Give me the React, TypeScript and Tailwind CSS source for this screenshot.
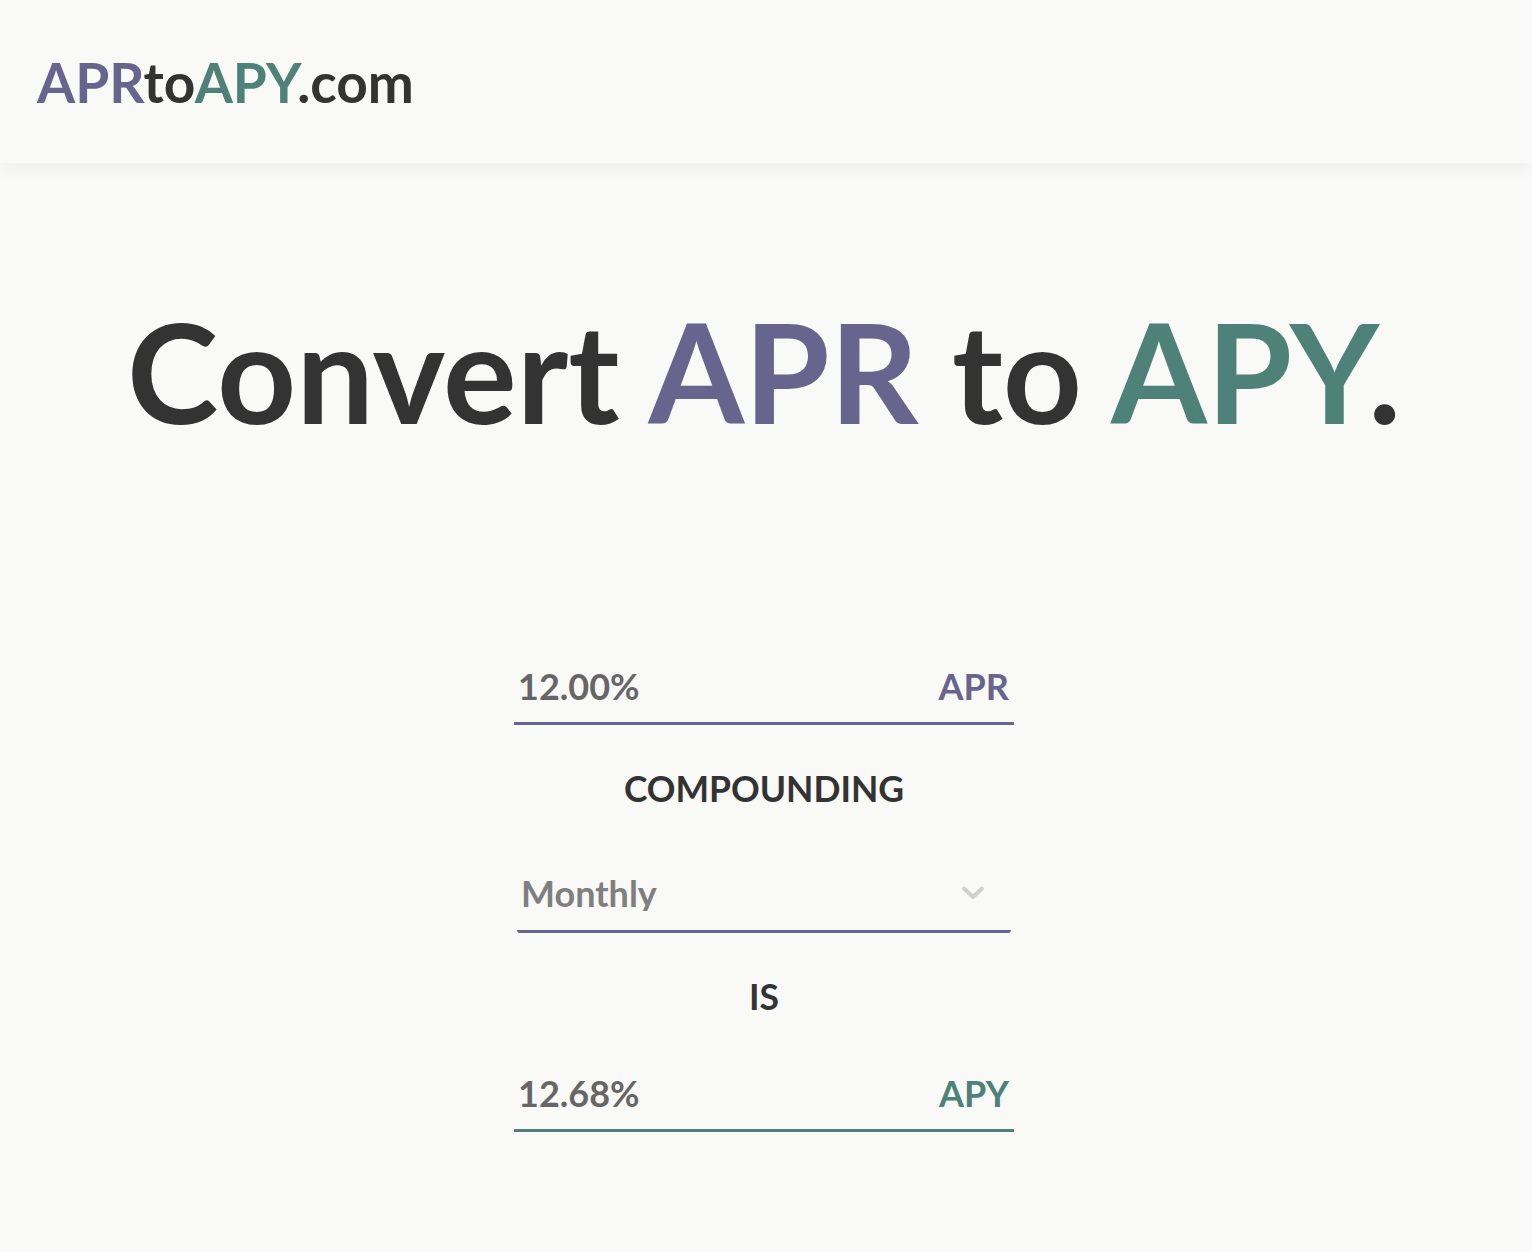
import { useState } from 'react';

const PURPLE = 'text-[#67658d]';
const GREEN = 'text-[#4e8279]';

function rateToApy(apr: number, periods: number) {
  return (Math.pow(1 + apr / 100 / periods, periods) - 1) * 100;
}

export default function App() {
  const [apr, setApr] = useState('12.00%');
  const [periods, setPeriods] = useState(12);
  const apy = rateToApy(parseFloat(apr) || 0, periods);

  return (
    <div className="min-h-[1252px] bg-[#f9f9f7] font-['Lato',sans-serif] text-[#333]">
      {/* Header */}
      <header className="relative h-[163px] bg-[#f9f9f7] pl-[37px] pt-[55px] shadow-[0_6px_16px_rgba(0,0,0,0.04)]">
        <a className="block text-[55px] font-bold leading-none">
          <span className={PURPLE}>APR</span>
          <span>to</span>
          <span className={GREEN}>APY</span>
          <span>.com</span>
        </a>
      </header>

      <main className="flex flex-col items-center pr-[4px]">
        <h1 className="mt-[139px] text-[138px] font-bold leading-none">
          Convert <span className={PURPLE}>APR</span> to <span className={GREEN}>APY</span>.
        </h1>

        <div className="mt-[228px] flex w-[500px] flex-col items-center">
          {/* APR input */}
          <label className="flex w-full items-center border-b-[3px] border-[#67658d] pb-[18px] pl-[4px] pr-[5px]">
            <input
              value={apr}
              onChange={(e) => setApr(e.target.value)}
              className="h-[36px] min-w-0 flex-1 bg-transparent p-0 text-[36px] font-bold leading-[36px] text-[#666] outline-none"
            />
            <span className={`h-[36px] text-[36px] font-bold leading-[36px] ${PURPLE}`}>APR</span>
          </label>

          <div className="mt-[46px] text-[35.5px] font-bold leading-none">COMPOUNDING</div>

          {/* Compounding select */}
          <div className="relative mt-[68px] w-[494px] rounded-[3px] border-b-[3px] border-[#67658d] pb-[19px] pl-[4px]">
            <select
              value={periods}
              onChange={(e) => setPeriods(Number(e.target.value))}
              className="block h-[36px] w-full appearance-none bg-transparent p-0 text-[36px] font-bold leading-[36px] text-[#7f7f7f] outline-none"
            >
              <option value={1}>Annually</option>
              <option value={2}>Semiannually</option>
              <option value={4}>Quarterly</option>
              <option value={12}>Monthly</option>
              <option value={52}>Weekly</option>
              <option value={365}>Daily</option>
            </select>
            <svg
              className="pointer-events-none absolute right-[26px] top-[10px]"
              width="24"
              height="16"
              viewBox="0 0 24 16"
              fill="none"
            >
              <path d="M3 3.5 L12 12 L21 3.5" stroke="#d0d0d0" strokeWidth="4" strokeLinecap="round" strokeLinejoin="round" />
            </svg>
          </div>

          <div className="mt-[46px] text-[35.5px] font-bold leading-none">IS</div>

          {/* APY output */}
          <label className="mt-[61px] flex w-full items-center border-b-[3px] border-[#4e8279] pb-[18px] pl-[4px] pr-[5px]">
            <input
              readOnly
              value={`${apy.toFixed(2)}%`}
              className="h-[36px] min-w-0 flex-1 bg-transparent p-0 text-[36px] font-bold leading-[36px] text-[#666] outline-none"
            />
            <span className={`h-[36px] text-[36px] font-bold leading-[36px] ${GREEN}`}>APY</span>
          </label>
        </div>
      </main>
    </div>
  );
}
